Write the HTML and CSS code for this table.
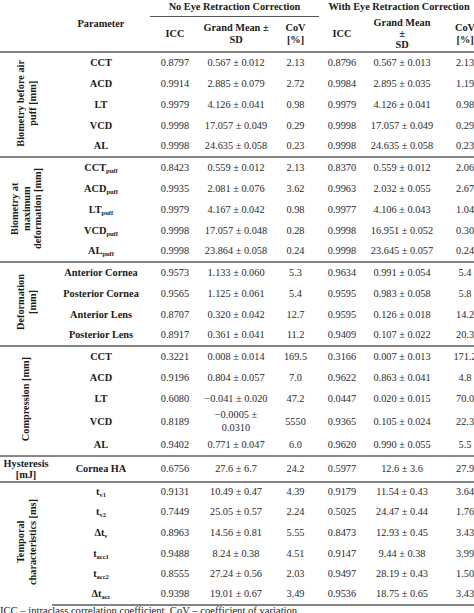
FILE: index.html
```html
<!DOCTYPE html>
<html>
<head>
<meta charset="utf-8">
<link rel="stylesheet" href="styles.css">
</head>
<body>
<div class="page">
<table class="tbl">
<colgroup>
<col class="c-sec"><col class="c-par"><col class="c-icc"><col class="c-gm"><col class="c-cov"><col class="c-icc2"><col class="c-gm2"><col class="c-cov2">
</colgroup>
<thead>
<tr class="h1">
<th rowspan="2" class="blank"></th>
<th rowspan="2" class="param">Parameter</th>
<th colspan="3" class="grp grp-no">No Eye Retraction Correction</th>
<th colspan="3" class="grp grp-with">With Eye Retraction Correction</th>
</tr>
<tr class="h2">
<th>ICC</th><th class="two">Grand Mean ±<br>SD</th><th class="two">CoV<br>[%]</th>
<th>ICC</th><th class="three">Grand Mean<br>±<br>SD</th><th class="two">CoV<br>[%]</th>
</tr>
</thead>
<tbody class="sec">
<tr><th rowspan="5" class="seclab"><span class="vert">Biometry before air<br>puff [mm]</span></th><th>CCT</th><td>0.8797</td><td>0.567 ± 0.012</td><td>2.13</td><td>0.8796</td><td>0.567 ± 0.013</td><td>2.13</td></tr>
<tr><th>ACD</th><td>0.9914</td><td>2.885 ± 0.079</td><td>2.72</td><td>0.9984</td><td>2.895 ± 0.035</td><td>1.19</td></tr>
<tr><th>LT</th><td>0.9979</td><td>4.126 ± 0.041</td><td>0.98</td><td>0.9979</td><td>4.126 ± 0.041</td><td>0.98</td></tr>
<tr><th>VCD</th><td>0.9998</td><td>17.057 ± 0.049</td><td>0.29</td><td>0.9998</td><td>17.057 ± 0.049</td><td>0.29</td></tr>
<tr><th>AL</th><td>0.9998</td><td>24.635 ± 0.058</td><td>0.23</td><td>0.9998</td><td>24.635 ± 0.058</td><td>0.23</td></tr>
</tbody>
<tbody class="sec">
<tr><th rowspan="5" class="seclab"><span class="vert">Biometry at<br>maximum<br>deformation [mm]</span></th><th>CCT<sub>puff</sub></th><td>0.8423</td><td>0.559 ± 0.012</td><td>2.13</td><td>0.8370</td><td>0.559 ± 0.012</td><td>2.06</td></tr>
<tr><th>ACD<sub>puff</sub></th><td>0.9935</td><td>2.081 ± 0.076</td><td>3.62</td><td>0.9963</td><td>2.032 ± 0.055</td><td>2.67</td></tr>
<tr><th>LT<sub>puff</sub></th><td>0.9979</td><td>4.167 ± 0.042</td><td>0.98</td><td>0.9977</td><td>4.106 ± 0.043</td><td>1.04</td></tr>
<tr><th>VCD<sub>puff</sub></th><td>0.9998</td><td>17.057 ± 0.048</td><td>0.28</td><td>0.9998</td><td>16.951 ± 0.052</td><td>0.30</td></tr>
<tr><th>AL<sub>puff</sub></th><td>0.9998</td><td>23.864 ± 0.058</td><td>0.24</td><td>0.9998</td><td>23.645 ± 0.057</td><td>0.24</td></tr>
</tbody>
<tbody class="sec">
<tr><th rowspan="4" class="seclab"><span class="vert">Deformation<br>[mm]</span></th><th>Anterior Cornea</th><td>0.9573</td><td>1.133 ± 0.060</td><td>5.3</td><td>0.9634</td><td>0.991 ± 0.054</td><td>5.4</td></tr>
<tr><th>Posterior Cornea</th><td>0.9565</td><td>1.125 ± 0.061</td><td>5.4</td><td>0.9595</td><td>0.983 ± 0.058</td><td>5.8</td></tr>
<tr><th>Anterior Lens</th><td>0.8707</td><td>0.320 ± 0.042</td><td>12.7</td><td>0.9595</td><td>0.126 ± 0.018</td><td>14.2</td></tr>
<tr><th>Posterior Lens</th><td>0.8917</td><td>0.361 ± 0.041</td><td>11.2</td><td>0.9409</td><td>0.107 ± 0.022</td><td>20.3</td></tr>
</tbody>
<tbody class="sec">
<tr><th rowspan="5" class="seclab"><span class="vert">Compression [mm]</span></th><th>CCT</th><td>0.3221</td><td>0.008 ± 0.014</td><td>169.5</td><td>0.3166</td><td>0.007 ± 0.013</td><td>171.2</td></tr>
<tr><th>ACD</th><td>0.9196</td><td>0.804 ± 0.057</td><td>7.0</td><td>0.9622</td><td>0.863 ± 0.041</td><td>4.8</td></tr>
<tr><th>LT</th><td>0.6080</td><td>−0.041 ± 0.020</td><td>47.2</td><td>0.0447</td><td>0.020 ± 0.015</td><td>70.0</td></tr>
<tr class="tall"><th>VCD</th><td>0.8189</td><td class="twoline">−0.0005 ±<br>0.0310</td><td>5550</td><td>0.9365</td><td>0.105 ± 0.024</td><td>22.3</td></tr>
<tr><th>AL</th><td>0.9402</td><td>0.771 ± 0.047</td><td>6.0</td><td>0.9620</td><td>0.990 ± 0.055</td><td>5.5</td></tr>
</tbody>
<tbody class="sec">
<tr class="hyst"><th class="seclab flat">Hysteresis<br>[mJ]</th><th>Cornea HA</th><td>0.6756</td><td>27.6 ± 6.7</td><td>24.2</td><td>0.5977</td><td>12.6 ± 3.6</td><td>27.9</td></tr>
</tbody>
<tbody class="sec last">
<tr><th rowspan="6" class="seclab"><span class="vert">Temporal<br>characteristics [ms]</span></th><th>t<sub>v1</sub></th><td>0.9131</td><td>10.49 ± 0.47</td><td>4.39</td><td>0.9179</td><td>11.54 ± 0.43</td><td>3.64</td></tr>
<tr><th>t<sub>v2</sub></th><td>0.7449</td><td>25.05 ± 0.57</td><td>2.24</td><td>0.5025</td><td>24.47 ± 0.44</td><td>1.76</td></tr>
<tr><th>Δt<sub>v</sub></th><td>0.8963</td><td>14.56 ± 0.81</td><td>5.55</td><td>0.8473</td><td>12.93 ± 0.45</td><td>3.43</td></tr>
<tr><th>t<sub>acc1</sub></th><td>0.9488</td><td>8.24 ± 0.38</td><td>4.51</td><td>0.9147</td><td>9.44 ± 0.38</td><td>3.99</td></tr>
<tr><th>t<sub>acc2</sub></th><td>0.8555</td><td>27.24 ± 0.56</td><td>2.03</td><td>0.9497</td><td>28.19 ± 0.43</td><td>1.50</td></tr>
<tr><th>Δt<sub>acc</sub></th><td>0.9398</td><td>19.01 ± 0.67</td><td>3.49</td><td>0.9536</td><td>18.75 ± 0.65</td><td>3.43</td></tr>
</tbody>
</table>
<p class="note">ICC – intraclass correlation coefficient, CoV – coefficient of variation</p>
</div>
</body>
</html>
```
FILE: styles.css
```css
html, body {
  margin: 0;
  padding: 0;
  background: #ffffff;
  overflow: hidden;
}
.page {
  width: 474px;
  height: 613px;
  overflow: hidden;
  font-family: "Liberation Serif", "Times New Roman", serif;
  color: #222222;
}
.tbl {
  border-collapse: collapse;
  table-layout: fixed;
  width: 491px;
  font-size: 10.3px;
}
.c-sec { width: 52px; }
.c-par { width: 98px; }
.c-icc { width: 50px; }
.c-gm { width: 72px; }
.c-cov { width: 47px; }
.c-icc2 { width: 46px; }
.c-gm2 { width: 74px; }
.c-cov2 { width: 52px; }
.tbl th, .tbl td {
  padding: 0;
  text-align: center;
  vertical-align: middle;
  white-space: nowrap;
  line-height: 12px;
}
.tbl th {
  font-weight: bold;
  color: #1a1a1a;
}
.tbl td {
  font-weight: normal;
  color: #2b2b2b;
}
.h1 { height: 16px; }
.tbl .grp { vertical-align: top; padding-top: 1px; line-height: 12px; }
.tbl .grp-no { border-bottom: 1px solid #555555; }
.tbl .grp-with { padding-right: 12px; }
.tbl .param { padding-bottom: 3px; }
.h2 { height: 36px; }
.tbl .three { line-height: 11px; }
.sec > tr { height: 21px; }
.sec.last > tr { height: 20.6px; }
.sec > tr:first-child > * { border-top: 2px solid #858585; }
.sec.last > tr:last-child > * { border-bottom: 2px solid #858585; }
.sec > tr.tall { height: 25.5px; }
.sec > tr.hyst { height: 26px; }
.vert {
  display: inline-block;
  writing-mode: vertical-rl;
  transform: rotate(180deg);
  text-align: center;
  line-height: 11.5px;
}
.tbl .flat { line-height: 11px; }
.tbl sub {
  font-size: 6.5px;
  line-height: 0;
  vertical-align: -2px;
}
.tbl .twoline { line-height: 12.5px; }
.note {
  margin: 0;
  font-family: "Liberation Serif", "Times New Roman", serif;
  font-size: 10.6px;
  line-height: 10px;
  color: #222222;
  white-space: nowrap;
}
```
